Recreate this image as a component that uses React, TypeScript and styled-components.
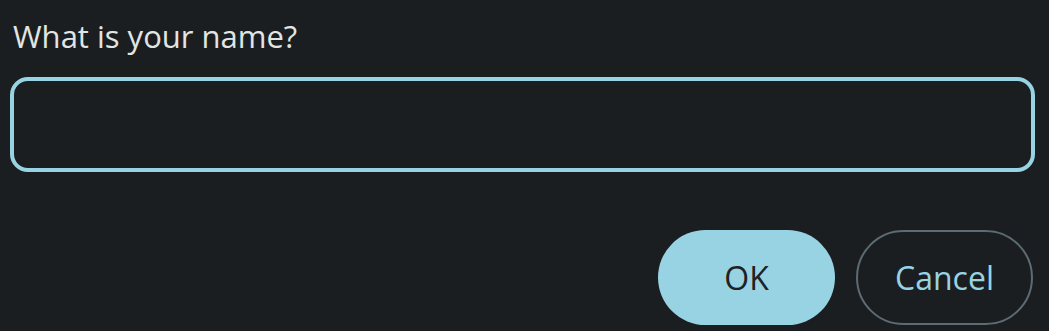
import React from 'react';
import styled, { createGlobalStyle } from 'styled-components';

const GlobalStyle = createGlobalStyle`
  html, body {
    margin: 0;
    padding: 0;
    background-color: #1b1e20;
  }
  body {
    font-family: 'Open Sans', 'Noto Sans', sans-serif;
  }
`;

const Dialog = styled.form`
  display: flex;
  flex-direction: column;
  padding: 10px 14px 6px 10px;
  height: 331px;
  box-sizing: border-box;
`;

const Label = styled.label`
  color: #e1e6e4;
  font-size: 31px;
  line-height: 44px;
  margin: 4px 0 0 3px;
`;

const NameInput = styled.input`
  margin-top: 19px;
  height: 95px;
  box-sizing: border-box;
  width: 100%;
  background: #1b1e20;
  border: 4px solid #98d3e3;
  border-radius: 18px;
  color: #e1e6e4;
  font-family: inherit;
  font-size: 32px;
  padding: 0 20px;
  outline: none;
`;

const ButtonRow = styled.div`
  display: flex;
  justify-content: flex-end;
  gap: 21px;
  margin-top: auto;
  margin-right: 2px;
`;

const Button = styled.button<{ $primary?: boolean }>`
  width: 177px;
  height: 95px;
  border-radius: 48px;
  font-family: inherit;
  font-size: 32px;
  font-weight: 500;
  cursor: pointer;
  box-sizing: border-box;
  background: ${(p) => (p.$primary ? '#98d3e3' : 'transparent')};
  color: ${(p) => (p.$primary ? '#1e2224' : '#98d3e3')};
  border: ${(p) => (p.$primary ? 'none' : '2px solid #5c6b74')};
`;

export default function App() {
  return (
    <>
      <GlobalStyle />
      <Dialog onSubmit={(e) => e.preventDefault()}>
        <Label htmlFor="name">What is your name?</Label>
        <NameInput id="name" type="text" />
        <ButtonRow>
          <Button type="submit" $primary>OK</Button>
          <Button type="button">Cancel</Button>
        </ButtonRow>
      </Dialog>
    </>
  );
}
